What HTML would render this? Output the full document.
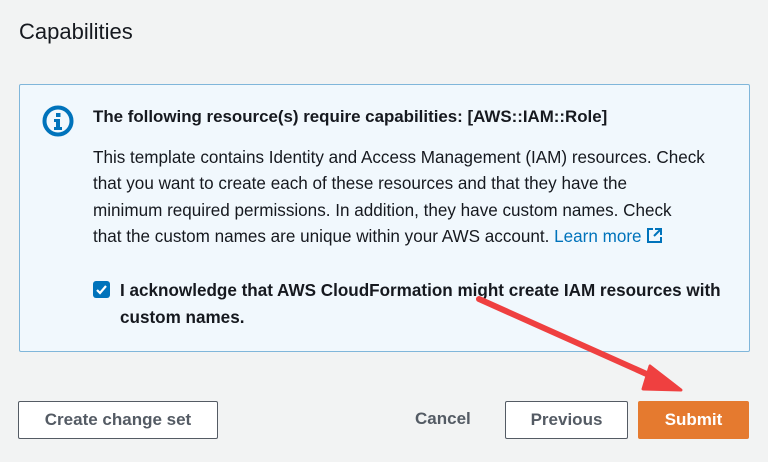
<!DOCTYPE html>
<html><head><style>
body{margin:0;width:768px;height:462px;background:#f2f3f3;font-family:"Liberation Sans",sans-serif;color:#16191f;position:relative;overflow:hidden}
.t{position:absolute;white-space:nowrap}
.box{position:absolute;left:19px;top:84px;width:729px;height:266px;background:#f1f8fd;border:1px solid #80b6da;border-radius:2px}
.btn{position:absolute;top:401px;height:38px;box-sizing:border-box;border-radius:2px;font-weight:bold;font-size:17px;display:flex;align-items:center;justify-content:center;color:#545b64}
</style></head><body>
<div class="t" style="left:19px;top:19px;font-size:22px;color:#16191f">Capabilities</div>
<div class="box"></div>
<svg style="position:absolute;left:42px;top:105px" width="32" height="32"><circle cx="16" cy="16" r="13.5" fill="none" stroke="#0073bb" stroke-width="4"/><rect x="14" y="8" width="4.5" height="4" fill="#0073bb"/><path d="M12 14h6v8h2v3h-8v-3h2v-5h-2z" fill="#0073bb"/></svg>
<div class="t" style="left:93px;top:107px;font-size:16.9px;font-weight:bold">The following resource(s) require capabilities: [AWS::IAM::Role]</div>
<div class="t" style="left:93px;top:145px;font-size:17.1px;line-height:26.3px;color:#16191f">This template contains Identity and Access Management (IAM) resources. Check<br>that you want to create each of these resources and that they have the<br>minimum required permissions. In addition, they have custom names. Check<br>that the custom names are unique within your AWS account. <span style="color:#0073bb">Learn more</span> <svg width="17" height="17" style="vertical-align:-2px"><path d="M7 2H2v13h13V10" fill="none" stroke="#0073bb" stroke-width="2"/><path d="M9 2h6v6M15 2L8 9" fill="none" stroke="#0073bb" stroke-width="2"/></svg></div>
<div style="position:absolute;left:93px;top:281px;width:17px;height:17px;background:#0073bb;border-radius:3px"><svg width="17" height="17"><path d="M4 9l3 3 6-7" fill="none" stroke="#fff" stroke-width="2.2"/></svg></div>
<div class="t" style="left:120px;top:277px;font-size:17.1px;line-height:27px;font-weight:bold">I acknowledge that AWS CloudFormation might create IAM resources with<br>custom names.</div>
<div class="btn" style="left:18px;width:200px;background:#fff;border:1px solid #545b64">Create change set</div>
<div class="t" style="left:415px;top:409px;font-size:17px;font-weight:bold;color:#545b64">Cancel</div>
<div class="btn" style="left:505px;width:123px;background:#fff;border:1px solid #545b64">Previous</div>
<div class="btn" style="left:638px;width:111px;background:#e57a2f;color:#fff">Submit</div>
<svg style="position:absolute;left:0;top:0" width="768" height="462"><line x1="479" y1="299" x2="660" y2="380" stroke="#ef4040" stroke-width="6" stroke-linecap="round"/><path d="M681 390L650 366L643 389Z" fill="#ef4040" stroke="#ef4040" stroke-width="3" stroke-linejoin="round"/></svg>
</body></html>
